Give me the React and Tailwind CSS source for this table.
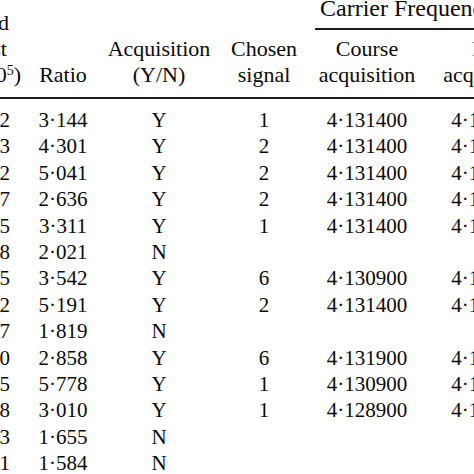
import React from 'react'

// rows of the acquisition table (only part of it is in view)
const rows = [
  { cost: '1·0422', ratio: '3·144', acq: 'Y', sig: '1', course: '4·131400', fine: '4·131350' },
  { cost: '1·2813', ratio: '4·301', acq: 'Y', sig: '2', course: '4·131400', fine: '4·131375' },
  { cost: '1·5042', ratio: '5·041', acq: 'Y', sig: '2', course: '4·131400', fine: '4·131360' },
  { cost: '0·7837', ratio: '2·636', acq: 'Y', sig: '2', course: '4·131400', fine: '4·131390' },
  { cost: '0·9845', ratio: '3·311', acq: 'Y', sig: '1', course: '4·131400', fine: '4·131340' },
  { cost: '0·6018', ratio: '2·021', acq: 'N', sig: '', course: '', fine: '' },
  { cost: '1·0535', ratio: '3·542', acq: 'Y', sig: '6', course: '4·130900', fine: '4·130880' },
  { cost: '1·5442', ratio: '5·191', acq: 'Y', sig: '2', course: '4·131400', fine: '4·131365' },
  { cost: '0·5407', ratio: '1·819', acq: 'N', sig: '', course: '', fine: '' },
  { cost: '0·8500', ratio: '2·858', acq: 'Y', sig: '6', course: '4·131900', fine: '4·131870' },
  { cost: '1·7185', ratio: '5·778', acq: 'Y', sig: '1', course: '4·130900', fine: '4·130915' },
  { cost: '0·8958', ratio: '3·010', acq: 'Y', sig: '1', course: '4·128900', fine: '4·128940' },
  { cost: '0·4923', ratio: '1·655', acq: 'N', sig: '', course: '', fine: '' },
  { cost: '0·4711', ratio: '1·584', acq: 'N', sig: '', course: '', fine: '' },
]

export default function App() {
  return (
    <div className="w-[474px] h-[474px] overflow-hidden bg-white text-[#0a0a0a] font-['Liberation_Serif',serif]">
      <div className="ml-[-100px] w-[700px]">
        {/* header */}
        <div className="grid grid-cols-[125px_76px_116px_94px_112px_137px] h-[99px] border-b-2 border-[#1c1c1c] text-[22px] leading-[26px]">
          <div className="self-end pb-[9px] text-right whitespace-nowrap">
            <div className="pr-[16px]">Estimated</div>
            <div className="pr-[18px]">cost</div>
            <div className="pr-[4px]">(×10<sup className="text-[14px]">5</sup>)</div>
          </div>
          <div className="self-end pb-[9px] text-center">Ratio</div>
          <div className="self-end pb-[9px] text-center">Acquisition<br />(Y/N)</div>
          <div className="self-end pb-[9px] text-center">Chosen<br />signal</div>
          <div className="col-span-2 flex flex-col">
            <div className="mt-[-5px] pl-[9px] whitespace-nowrap text-[24px]">Carrier Frequency (MHz)</div>
            <div className="ml-[4px] mt-[7px] h-[2px] bg-[#1c1c1c]" />
            <div className="mt-auto pb-[9px] grid grid-cols-[112px_137px] text-center">
              <div>Course<br />acquisition</div>
              <div>Fine<br />acquisition</div>
            </div>
          </div>
        </div>

        {/* body */}
        <div className="pt-[8px] text-[21px] leading-[26.4px]">
          {rows.map((r, i) => (
            <div key={i} className="grid grid-cols-[125px_76px_116px_94px_112px_137px] text-center whitespace-nowrap">
              <div className="text-right pr-[15px]">{r.cost}</div>
              <div>{r.ratio}</div>
              <div>{r.acq}</div>
              <div>{r.sig}</div>
              <div>{r.course}</div>
              <div>{r.fine}</div>
            </div>
          ))}
        </div>
      </div>
    </div>
  )
}
